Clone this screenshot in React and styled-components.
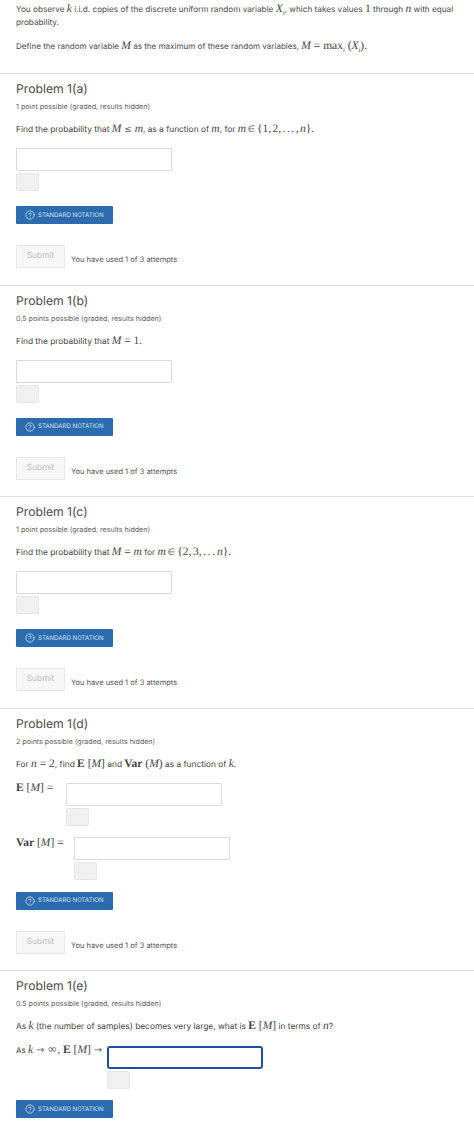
import styled, { createGlobalStyle } from "styled-components";
import { CircleHelp } from "lucide-react";

const Global = createGlobalStyle`
  html, body { margin: 0; padding: 0; background: #fff; }
  body {
    font-family: Inter, "Liberation Sans", sans-serif;
    color: #4a4a4a;
    text-rendering: geometricPrecision;
  }
`;

const Page = styled.div`
  width: 474px;
  height: 1124px;
  overflow: hidden;
  font-size: 8.6px;
`;
const Intro = styled.div`
  padding: 3px 0 20px 16px;
`;
const IntroText = styled.p`
  margin: 0 0 ${(p) => p.$gap || 0}px;
  line-height: 13px;
  font-size: ${(p) => p.$size}px;
  white-space: nowrap;
`;
const Section = styled.section`
  border-top: 1px solid #dedede;
  padding: 7px 0 ${(p) => p.$bottom ?? 16.5}px 16px;
`;
const Title = styled.h3`
  margin: 0;
  font-size: 12.2px;
  line-height: 16px;
  font-weight: 400;
  color: #4d4d4d;
`;
const Meta = styled.div`
  margin-top: 4px;
  font-size: 7.1px;
  line-height: 12px;
  color: #5e5e5e;
`;
const Prompt = styled.p`
  margin: 10px 0 0;
  font-size: 8.35px;
  line-height: 14px;
  color: #414141;
`;
const Math = styled.span`
  font-family: "Liberation Serif", serif;
  font-size: 11.5px;
  line-height: 0;
  color: #444;
  white-space: pre;
  word-spacing: ${(p) => p.$tight || 0}px;
`;
const V = styled.i`
  font-family: "Liberation Serif", serif;
  font-style: italic;
`;
const B = styled.b`
  font-family: "Liberation Serif", serif;
  font-weight: 700;
`;
const Rel = styled.span`
  font-family: "DejaVu Sans", sans-serif;
  font-size: ${(p) => p.$size || 9}px;
  color: #666;
`;
const Sub = styled.sub`
  font-size: 6.5px;
  line-height: 0;
`;
const AnswerStack = styled.div`
  display: flex;
  flex-direction: column;
  align-items: flex-start;
  gap: 2px;
  margin-top: ${(p) => p.$top ?? 11}px;
`;
const Answer = styled.div`
  width: 156px;
  height: 23px;
  box-sizing: border-box;
  background: #fff;
  border: 1px solid ${(p) => (p.$focused ? "#1f4e9e" : "#d9d9d9")};
  border-width: ${(p) => (p.$focused ? 2 : 1)}px;
  border-radius: ${(p) => (p.$focused ? 3 : 1)}px;
`;
const Preview = styled.div`
  width: 23px;
  height: 18px;
  box-sizing: border-box;
  background: #f0f0f0;
  border: 1px solid #e6e6e6;
  border-radius: 2px;
`;
const NotationButton = styled.div`
  display: flex;
  align-items: center;
  gap: 3px;
  box-sizing: border-box;
  width: 97px;
  height: 18px;
  margin-top: ${(p) => p.$top ?? 15}px;
  padding-left: 9px;
  background: #2c6cae;
  border-radius: 1px;
  color: #d3e2f0;
  font-size: 6.1px;
  white-space: nowrap;
`;
const SubmitRow = styled.div`
  display: flex;
  align-items: flex-end;
  gap: 6px;
  margin-top: 21px;
`;
const Submit = styled.div`
  width: 49px;
  height: 23px;
  box-sizing: border-box;
  border: 1px solid #e8e8e8;
  background: #f7f7f7;
  color: #bdbdbd;
  font-size: 8.4px;
  line-height: 21px;
  text-align: center;
`;
const Attempts = styled.span`
  font-size: 7.5px;
  line-height: 14px;
  padding-bottom: 1px;
  color: #555;
`;
const LabeledAnswer = styled.div`
  display: flex;
  align-items: flex-start;
  margin-top: ${(p) => p.$top}px;
`;
const AnswerLabel = styled.div`
  width: ${(p) => p.$width}px;
  flex: none;
  line-height: ${(p) => p.$line}px;
  font-size: 8px;
  color: #444;
  white-space: nowrap;
`;

const Notation = ({ top }) => (
  <NotationButton $top={top}>
    <CircleHelp size={10} strokeWidth={1.7} color="#e6eff7" />
    STANDARD NOTATION
  </NotationButton>
);

const Footer = () => (
  <SubmitRow>
    <Submit>Submit</Submit>
    <Attempts>You have used 1 of 3 attempts</Attempts>
  </SubmitRow>
);

const Problem = ({ title, meta, children }) => (
  <Section>
    <Title>{title}</Title>
    <Meta>{meta}</Meta>
    <Prompt>{children}</Prompt>
    <AnswerStack>
      <Answer />
      <Preview />
    </AnswerStack>
    <Notation />
    <Footer />
  </Section>
);

export default function App() {
  return (
    <Page>
      <Global />
      <Intro>
        <IntroText $gap={11} $size={8.2}>
          You observe <Math><V>k</V></Math> i.i.d. copies of the discrete uniform random variable{" "}
          <Math><V>X</V><Sub><V>i</V></Sub></Math>, which takes values <Math>1</Math> through{" "}
          <Math><V>n</V></Math> with equal
          <br />
          probability.
        </IntroText>
        <IntroText $size={8.05}>
          Define the random variable <Math><V>M</V></Math> as the maximum of these random variables,{" "}
          <Math><V>M</V> = max<Sub><V>i</V></Sub> (<V>X</V><Sub><V>i</V></Sub>).</Math>
        </IntroText>
      </Intro>

      <Problem title="Problem 1(a)" meta="1 point possible (graded, results hidden)">
        Find the probability that <Math><V>M</V> <Rel>≤</Rel> <V>m</V></Math>, as a function of <Math><V>m</V></Math>, for{" "}
        <Math $tight={-1.4}><V>m</V> <Rel>∈</Rel> {"{"}1, 2, . . . , <V>n</V>{"}"}.</Math>
      </Problem>

      <Problem title="Problem 1(b)" meta="0.5 points possible (graded, results hidden)">
        Find the probability that <Math><V>M</V> = 1.</Math>
      </Problem>

      <Problem title="Problem 1(c)" meta="1 point possible (graded, results hidden)">
        Find the probability that <Math><V>M</V> = <V>m</V></Math> for{" "}
        <Math $tight={-1.2}><V>m</V> <Rel>∈</Rel> {"{"}2, 3, . . . <V>n</V>{"}"}.</Math>
      </Problem>

      <Section>
        <Title>Problem 1(d)</Title>
        <Meta>2 points possible (graded, results hidden)</Meta>
        <Prompt>
          For <Math><V>n</V> = 2</Math>, find <Math><B>E</B> [<V>M</V>]</Math> and{" "}
          <Math><B>Var</B> (<V>M</V>)</Math> as a function of <Math><V>k</V></Math>.
        </Prompt>
        <LabeledAnswer $top={11}>
          <AnswerLabel $width={50} $line={10}>
            <Math><B>E</B> [<V>M</V>] =</Math>
          </AnswerLabel>
          <AnswerStack $top={0}>
            <Answer />
            <Preview />
          </AnswerStack>
        </LabeledAnswer>
        <LabeledAnswer $top={11}>
          <AnswerLabel $width={58} $line={12}>
            <Math><B>Var</B> [<V>M</V>] =</Math>
          </AnswerLabel>
          <AnswerStack $top={0}>
            <Answer />
            <Preview />
          </AnswerStack>
        </LabeledAnswer>
        <Notation top={12} />
        <Footer />
      </Section>

      <Section $bottom={0}>
        <Title>Problem 1(e)</Title>
        <Meta>0.5 points possible (graded, results hidden)</Meta>
        <Prompt>
          As <Math><V>k</V></Math> (the number of samples) becomes very large, what is{" "}
          <Math><B>E</B> [<V>M</V>]</Math> in terms of <Math><V>n</V></Math>?
        </Prompt>
        <LabeledAnswer $top={12}>
          <AnswerLabel $width={91} $line={8}>
            As <Math><V>k</V> <Rel $size={10}>→</Rel> <Rel $size={12}>∞</Rel>, <B>E</B> [<V>M</V>] <Rel $size={10}>→</Rel></Math>
          </AnswerLabel>
          <AnswerStack $top={0}>
            <Answer $focused />
            <Preview />
          </AnswerStack>
        </LabeledAnswer>
        <Notation top={11} />
      </Section>
    </Page>
  );
}
